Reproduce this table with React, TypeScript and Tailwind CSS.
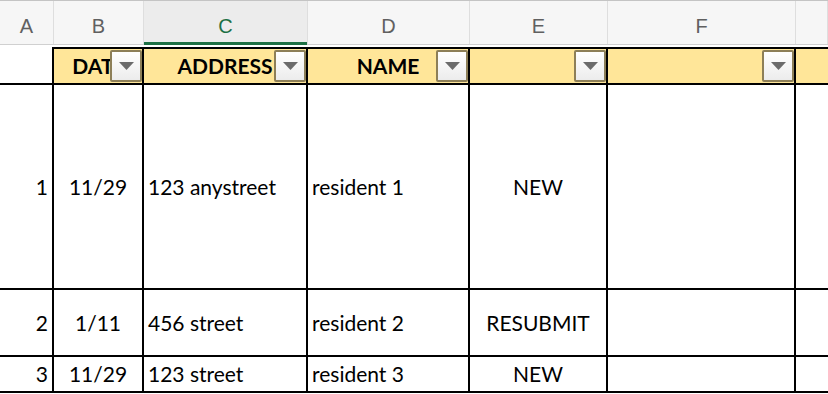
import React from 'react';

const cols = [
  { letter: 'A', w: 'w-[54px]' },
  { letter: 'B', w: 'w-[90px]' },
  { letter: 'C', w: 'w-[164px]' },
  { letter: 'D', w: 'w-[162px]' },
  { letter: 'E', w: 'w-[138px]' },
  { letter: 'F', w: 'w-[188px]' },
  { letter: '', w: 'flex-1' },
];

const rows = [
  { n: 1, date: '11/29', address: '123 anystreet', name: 'resident 1', status: 'NEW', h: 'h-[205px]' },
  { n: 2, date: '1/11', address: '456 street', name: 'resident 2', status: 'RESUBMIT', h: 'h-[67px]' },
  { n: 3, date: '11/29', address: '123 street', name: 'resident 3', status: 'NEW', h: 'h-[36px]' },
];

const FilterButton: React.FC = () => (
  <div className="absolute right-0 top-[1px] w-[32px] h-[32px] border-2 border-[#8d7f58] rounded-[2px] bg-gradient-to-b from-white to-[#ececec] flex items-center justify-center">
    <svg width="15" height="8" viewBox="0 0 15 8">
      <path d="M0 0 L15 0 L7.5 8 Z" fill="#6b6b6b" />
    </svg>
  </div>
);

const App: React.FC = () => {
  return (
    <div className="w-[828px] h-[394px] bg-white overflow-hidden" style={{ fontFamily: 'Lato, "Open Sans", sans-serif' }}>
      {/* column letters */}
      <div className="flex h-[45px] border-t border-[#c4c4c4] border-b border-b-[#d0d0d0] bg-[#f6f6f6]">
        {cols.map((c) => (
          <div
            key={c.letter || 'g'}
            className={`${c.w} relative flex items-center justify-center pt-[6px] border-r border-[#dedede] text-[20px] ${
              c.letter === 'C' ? 'bg-[#ececec] text-[#1d7044]' : 'text-[#606060]'
            }`}
            style={{ fontFamily: '"Liberation Sans", Arial, sans-serif' }}
          >
            {c.letter}
            {c.letter === 'C' && <div className="absolute left-0 right-0 bottom-[-1px] h-[3px] bg-[#1d7044]" />}
          </div>
        ))}
      </div>

      <div className="h-[2px]" />

      {/* table header row */}
      <div className="flex h-[38px] font-bold text-[21px] text-black">
        <div className="w-[54px] border-r-2 border-b-2 border-black bg-white" />
        <div className="w-[90px] relative border-r-2 border-y-2 border-black bg-[#ffe699] flex items-center justify-center overflow-hidden">
          <span className="pl-[2px]">DATE</span>
          <FilterButton />
        </div>
        <div className="w-[164px] relative border-r-2 border-y-2 border-black bg-[#ffe699] flex items-center justify-center">
          ADDRESS
          <FilterButton />
        </div>
        <div className="w-[162px] relative border-r-2 border-y-2 border-black bg-[#ffe699] flex items-center justify-center">
          NAME
          <FilterButton />
        </div>
        <div className="w-[138px] relative border-r-2 border-y-2 border-black bg-[#ffe699]">
          <FilterButton />
        </div>
        <div className="w-[188px] relative border-r-2 border-y-2 border-black bg-[#ffe699]">
          <FilterButton />
        </div>
        <div className="flex-1 border-y-2 border-black bg-[#ffe699]" />
      </div>

      {/* data rows */}
      {rows.map((r) => (
        <div key={r.n} className={`flex ${r.h} text-[21px] text-black`}>
          <div className="w-[54px] border-r-2 border-b-2 border-black flex items-center justify-end pr-[4px]">{r.n}</div>
          <div className="w-[90px] border-r-2 border-b-2 border-black flex items-center justify-center">{r.date}</div>
          <div className="w-[164px] border-r-2 border-b-2 border-black flex items-center pl-[4px]">{r.address}</div>
          <div className="w-[162px] border-r-2 border-b-2 border-black flex items-center pl-[4px]">{r.name}</div>
          <div className="w-[138px] border-r-2 border-b-2 border-black flex items-center justify-center">{r.status}</div>
          <div className="w-[188px] border-r-2 border-b-2 border-black" />
          <div className="flex-1 border-b-2 border-black" />
        </div>
      ))}
    </div>
  );
};

export default App;
